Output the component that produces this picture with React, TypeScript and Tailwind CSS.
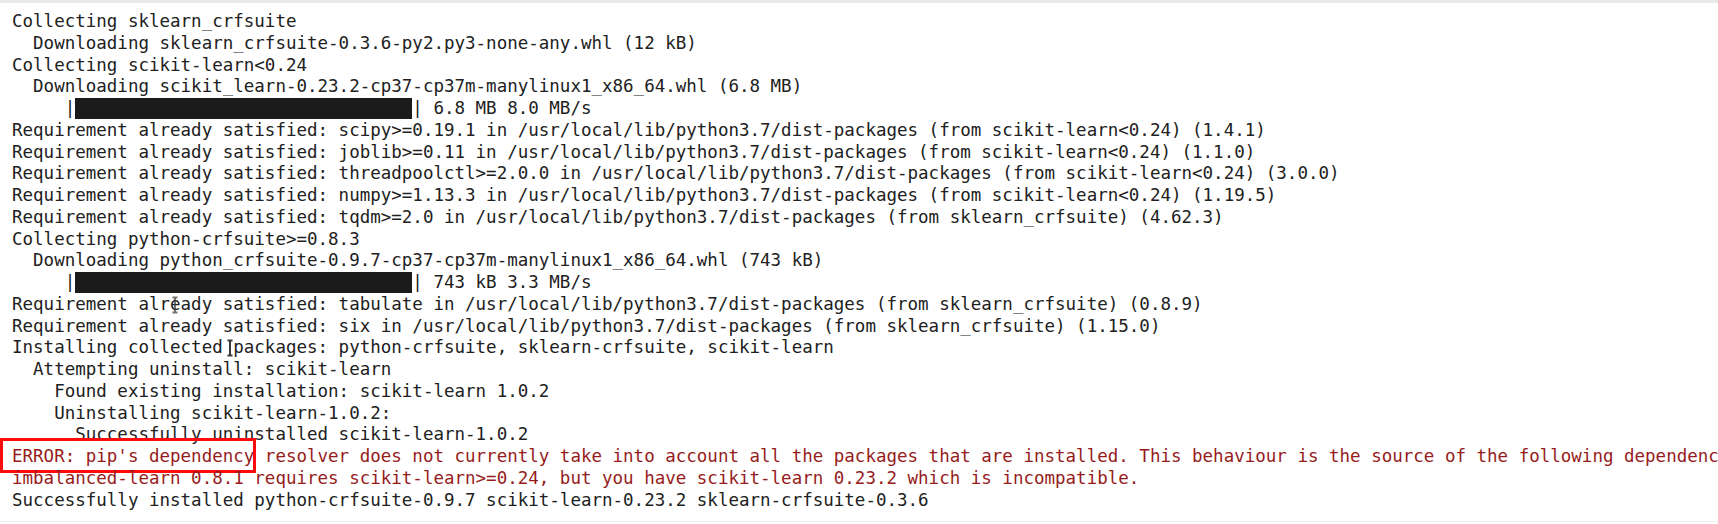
import React from "react"

type Line = {
  text: string
  error?: boolean
  bar?: string
}

const lines: Line[] = [
  { text: `Collecting sklearn_crfsuite` },
  { text: `  Downloading sklearn_crfsuite-0.3.6-py2.py3-none-any.whl (12 kB)` },
  { text: `Collecting scikit-learn<0.24` },
  { text: `  Downloading scikit_learn-0.23.2-cp37-cp37m-manylinux1_x86_64.whl (6.8 MB)` },
  { text: ``, bar: `| 6.8 MB 8.0 MB/s` },
  { text: `Requirement already satisfied: scipy>=0.19.1 in /usr/local/lib/python3.7/dist-packages (from scikit-learn<0.24) (1.4.1)` },
  { text: `Requirement already satisfied: joblib>=0.11 in /usr/local/lib/python3.7/dist-packages (from scikit-learn<0.24) (1.1.0)` },
  { text: `Requirement already satisfied: threadpoolctl>=2.0.0 in /usr/local/lib/python3.7/dist-packages (from scikit-learn<0.24) (3.0.0)` },
  { text: `Requirement already satisfied: numpy>=1.13.3 in /usr/local/lib/python3.7/dist-packages (from scikit-learn<0.24) (1.19.5)` },
  { text: `Requirement already satisfied: tqdm>=2.0 in /usr/local/lib/python3.7/dist-packages (from sklearn_crfsuite) (4.62.3)` },
  { text: `Collecting python-crfsuite>=0.8.3` },
  { text: `  Downloading python_crfsuite-0.9.7-cp37-cp37m-manylinux1_x86_64.whl (743 kB)` },
  { text: ``, bar: `| 743 kB 3.3 MB/s` },
  { text: `Requirement already satisfied: tabulate in /usr/local/lib/python3.7/dist-packages (from sklearn_crfsuite) (0.8.9)` },
  { text: `Requirement already satisfied: six in /usr/local/lib/python3.7/dist-packages (from sklearn_crfsuite) (1.15.0)` },
  { text: `Installing collected packages: python-crfsuite, sklearn-crfsuite, scikit-learn` },
  { text: `  Attempting uninstall: scikit-learn` },
  { text: `    Found existing installation: scikit-learn 1.0.2` },
  { text: `    Uninstalling scikit-learn-1.0.2:` },
  { text: `      Successfully uninstalled scikit-learn-1.0.2` },
  {
    text: `ERROR: pip's dependency resolver does not currently take into account all the packages that are installed. This behaviour is the source of the following dependency conflicts.`,
    error: true,
  },
  {
    text: `imbalanced-learn 0.8.1 requires scikit-learn>=0.24, but you have scikit-learn 0.23.2 which is incompatible.`,
    error: true,
  },
  { text: `Successfully installed python-crfsuite-0.9.7 scikit-learn-0.23.2 sklearn-crfsuite-0.3.6` },
]

function Cursor({ className }: { className: string }) {
  return (
    <svg className={className} viewBox="0 0 6 18" width="6" height="18">
      <path d="M0.5 0.5h5v2h-1.5v13h1.5v2h-5v-2h1.5v-13h-1.5z" fill="#3a3a3a" />
    </svg>
  )
}

export default function App() {
  return (
    <div className="relative w-[1718px] h-[524px] overflow-hidden bg-white border-t-[3px] border-[#e9e9e9]">
      <div className="pt-[8px] pl-[12px] font-['DejaVu_Sans_Mono','Liberation_Mono',monospace] text-[17.5px] leading-[21.75px] text-[#212121]">
        {lines.map((line, i) =>
          line.bar ? (
            <div key={i} className="flex items-start h-[21.75px] whitespace-pre">
              <span>{`     |`}</span>
              <span className="w-[32ch] h-[21px] bg-[#1b1b1b]" />
              <span>{line.bar}</span>
            </div>
          ) : (
            <div
              key={i}
              className={`relative whitespace-pre ${line.error ? "text-[#961c1c]" : ""}`}
            >
              {line.text}
              {i === 20 && (
                <div className="absolute left-[-12px] top-[-8px] w-[256px] h-[35px] border-[3px] border-[#ff0a0a]" />
              )}
              {i === 13 && <Cursor className="absolute left-[160px] top-[2px] opacity-70" />}
              {i === 15 && <Cursor className="absolute left-[215px] top-[2px]" />}
            </div>
          )
        )}
      </div>
      <div className="absolute left-0 right-0 bottom-[2px] h-px bg-[#eeeeee]" />
    </div>
  )
}
